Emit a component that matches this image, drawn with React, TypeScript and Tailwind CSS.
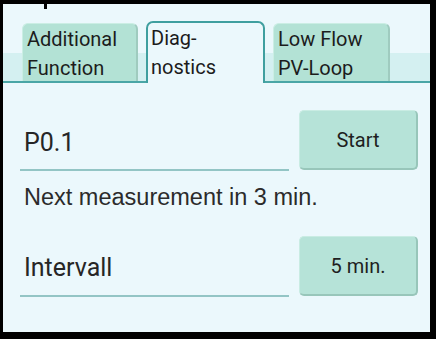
import React from 'react';

const tabs = [
  { id: 'additional', lines: ['Additional', 'Function'] },
  { id: 'diag', lines: ['Diag-', 'nostics'] },
  { id: 'lowflow', lines: ['Low Flow', 'PV-Loop'] },
];

function Tab({ lines, active, width }: { lines: string[]; active?: boolean; width: string }) {
  if (active) {
    return (
      <div
        className={`${width} h-[62px] -mb-[2px] relative z-10 bg-[#ebf8fc] border-2 border-b-0 border-[#3f9f9f] rounded-t-[7px] pl-[3px] pt-[1px] text-[20px] leading-[29px] text-[#1c1c1c]`}
      >
        {lines.map((l) => (
          <div key={l}>{l}</div>
        ))}
      </div>
    );
  }
  return (
    <div
      className={`${width} h-[58px] bg-[#b3e2d5] border border-b-0 border-[#cbeee4] border-r-2 border-r-[#9fcbbf] rounded-t-[6px] pl-[4px] pt-[1px] text-[20px] leading-[29px] text-[#1c1c1c]`}
    >
      {lines.map((l) => (
        <div key={l}>{l}</div>
      ))}
    </div>
  );
}

function SettingRow({ label, value, labelPad }: { label: string; value: string; labelPad: string }) {
  return (
    <div className="flex items-start pl-[17px] gap-[10px]">
      <div
        className={`w-[269px] h-[61px] border-b-2 border-[#93c5c5] pl-[4px] ${labelPad} text-[25px] leading-[30px] text-[#262626]`}
      >
        {label}
      </div>
      <button className="w-[119px] h-[60px] bg-[#b6e3d8] border border-[#c9ece3] border-r-2 border-b-2 border-r-[#98c6ba] border-b-[#98c6ba] rounded-[5px] flex items-center justify-center text-[20px] text-[#1f1f1f]">
        {value}
      </button>
    </div>
  );
}

export default function App() {
  return (
    <div className="w-[436px] h-[339px] bg-black pt-[4px] pl-[3px]" style={{ fontFamily: 'Roboto, "Liberation Sans", sans-serif' }}>
      <div className="relative w-[427px] h-[328px] bg-[#ebf8fc] flex flex-col">
        {/* descender of the title above */}
        <div className="absolute left-[41px] top-0 w-[3px] h-[5px] bg-black" />

        {/* Tab header */}
        <div className="h-[79px] border-b-2 border-[#4aa6a6] bg-[linear-gradient(to_bottom,#ebf8fc_49px,#d4f0f1_49px)] flex items-end gap-[8px] pl-[19px]">
          <Tab lines={tabs[0].lines} width="w-[116px]" />
          <Tab lines={tabs[1].lines} width="w-[119px]" active />
          <Tab lines={tabs[2].lines} width="w-[117px]" />
        </div>

        <div className="mt-[27px]">
          <SettingRow label="P0.1" value="Start" labelPad="pt-[18px]" />
        </div>

        <div
          className="mt-[12px] ml-[21px] text-[23.5px] leading-[28px] text-[#2b2b2b]"
          style={{ fontFamily: '"Liberation Sans", Arial, sans-serif' }}
        >
          Next measurement in 3 min.
        </div>

        <div className="mt-[25px]">
          <SettingRow label="Intervall" value="5 min." labelPad="pt-[17px]" />
        </div>
      </div>
    </div>
  );
}
